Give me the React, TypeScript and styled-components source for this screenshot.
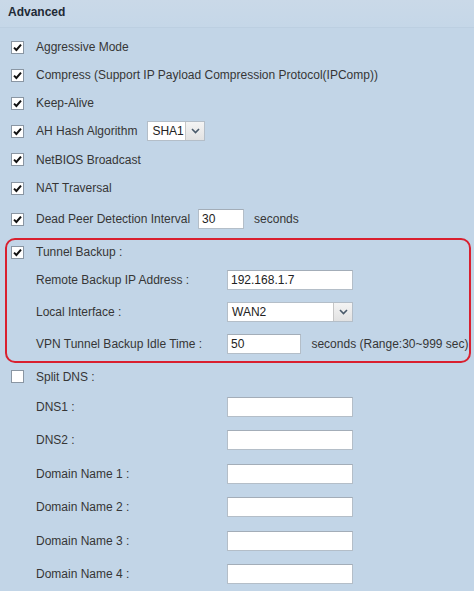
import React from 'react'
import styled, { createGlobalStyle } from 'styled-components'

const GlobalStyle = createGlobalStyle`
    html, body {
        margin: 0;
        padding: 0;
        background: #c2d5e7;
    }
    body {
        font-family: "Liberation Sans", Arial, sans-serif;
        font-size: 12px;
        color: #333;
    }
`

const Page = styled.div`
    width: 474px;
    height: 591px;
    overflow: hidden;
    background: #c2d5e7;
`

const Header = styled.div`
    height: 28px;
    display: flex;
    align-items: center;
    padding: 0 0 4px 8px;
    box-sizing: border-box;
    font-weight: bold;
    color: #1f2a36;
    background: linear-gradient(#cad9e8, #c5d7e8);
    border-bottom: 1px solid #bccfe1;
`

const List = styled.div`
    display: flex;
    flex-direction: column;
    padding-top: 5px;
`

const Row = styled.div<{ $h: number; $indent?: number }>`
    height: ${({ $h }) => $h}px;
    display: flex;
    align-items: center;
    padding-left: ${({ $indent = 11 }) => $indent}px;
    white-space: nowrap;
`

const FieldRow = styled.div<{ $h: number }>`
    height: ${({ $h }) => $h}px;
    display: grid;
    grid-template-columns: 191px auto auto;
    align-items: center;
    padding-left: 36px;
    white-space: nowrap;
`

const Highlight = styled.div`
    margin: 2px 3px 0 5px;
    border: 2px solid #d9202f;
    border-radius: 10px;
    display: flex;
    flex-direction: column;
`

const BoxRow = styled(FieldRow)`
    padding-left: 29px;
`

const Box = styled.span`
    width: 13px;
    height: 13px;
    box-sizing: border-box;
    border: 1px solid #8a96a3;
    background: #fff;
    display: inline-flex;
    align-items: center;
    justify-content: center;
    margin-right: 12px;
    flex-shrink: 0;
`

const Label = styled.span`
    color: #363636;
`

const Control = styled.span<{ $gap: number }>`
    margin-left: ${({ $gap }) => $gap}px;
    display: inline-flex;
`

const TextInput = styled.div<{ $w: number }>`
    width: ${({ $w }) => $w}px;
    height: 20px;
    box-sizing: border-box;
    border: 1px solid #b4bec8;
    border-top-color: #a3adb8;
    background: #fff;
    display: flex;
    align-items: center;
    padding-left: 3px;
    color: #222;
`

const SelectBox = styled.div<{ $w: number }>`
    width: ${({ $w }) => $w}px;
    height: 20px;
    box-sizing: border-box;
    border: 1px solid #b4bec8;
    background: #fff;
    display: flex;
    align-items: stretch;
    color: #222;
`

const SelectText = styled.span`
    flex: 1;
    display: flex;
    align-items: center;
    padding-left: 4px;
`

const Arrow = styled.span`
    width: 18px;
    background: linear-gradient(#f4f4f4, #e2e2e2);
    border-left: 1px solid #c6c6c6;
    display: flex;
    align-items: center;
    justify-content: center;
`

const Suffix = styled.span`
    margin-left: 10px;
    color: #363636;
`

const Check = ({ checked }: { checked: boolean }) => (
    <Box>
        {checked && (
            <svg width="9" height="9" viewBox="0 0 9 9">
                <path d="M1 4.6 L3.4 7 L8 1.6" fill="none" stroke="#111" strokeWidth="2" />
            </svg>
        )}
    </Box>
)

const Chevron = () => (
    <svg width="9" height="6" viewBox="0 0 9 6">
        <path d="M1 1 L4.5 4.5 L8 1" fill="none" stroke="#4a5a6a" strokeWidth="1.6" />
    </svg>
)

const Select = ({ value, width }: { value: string; width: number }) => (
    <SelectBox $w={width}>
        <SelectText>{value}</SelectText>
        <Arrow>
            <Chevron />
        </Arrow>
    </SelectBox>
)

const simpleChecks = ['Aggressive Mode', 'Compress (Support IP Payload Compression Protocol(IPComp))', 'Keep-Alive']
const dnsFields = ['DNS1 :', 'DNS2 :', 'Domain Name 1 :', 'Domain Name 2 :', 'Domain Name 3 :', 'Domain Name 4 :']

export default function App() {
    return (
        <Page>
            <GlobalStyle />
            <Header>Advanced</Header>
            <List>
                {simpleChecks.map(label => (
                    <Row key={label} $h={28}>
                        <Check checked />
                        <Label>{label}</Label>
                    </Row>
                ))}
                <Row $h={28}>
                    <Check checked />
                    <Label>AH Hash Algorithm</Label>
                    <Control $gap={10}>
                        <Select value="SHA1" width={58} />
                    </Control>
                </Row>
                <Row $h={29}>
                    <Check checked />
                    <Label>NetBIOS Broadcast</Label>
                </Row>
                <Row $h={28}>
                    <Check checked />
                    <Label>NAT Traversal</Label>
                </Row>
                <Row $h={34}>
                    <Check checked />
                    <Label>Dead Peer Detection Interval</Label>
                    <Control $gap={8}>
                        <TextInput $w={46}>30</TextInput>
                    </Control>
                    <Suffix>seconds</Suffix>
                </Row>
                <Highlight>
                    <Row $h={24} $indent={4}>
                        <Check checked />
                        <Label>Tunnel Backup :</Label>
                    </Row>
                    <BoxRow $h={32}>
                        <Label>Remote Backup IP Address :</Label>
                        <TextInput $w={126}>192.168.1.7</TextInput>
                    </BoxRow>
                    <BoxRow $h={31}>
                        <Label>Local Interface :</Label>
                        <Select value="WAN2" width={126} />
                    </BoxRow>
                    <BoxRow $h={34}>
                        <Label>VPN Tunnel Backup Idle Time :</Label>
                        <TextInput $w={74}>50</TextInput>
                        <Suffix>seconds (Range:30~999 sec)</Suffix>
                    </BoxRow>
                </Highlight>
                <Row $h={27}>
                    <Check checked={false} />
                    <Label>Split DNS :</Label>
                </Row>
                {dnsFields.map(label => (
                    <FieldRow key={label} $h={33.5}>
                        <Label>{label}</Label>
                        <TextInput $w={126} />
                    </FieldRow>
                ))}
            </List>
        </Page>
    )
}
